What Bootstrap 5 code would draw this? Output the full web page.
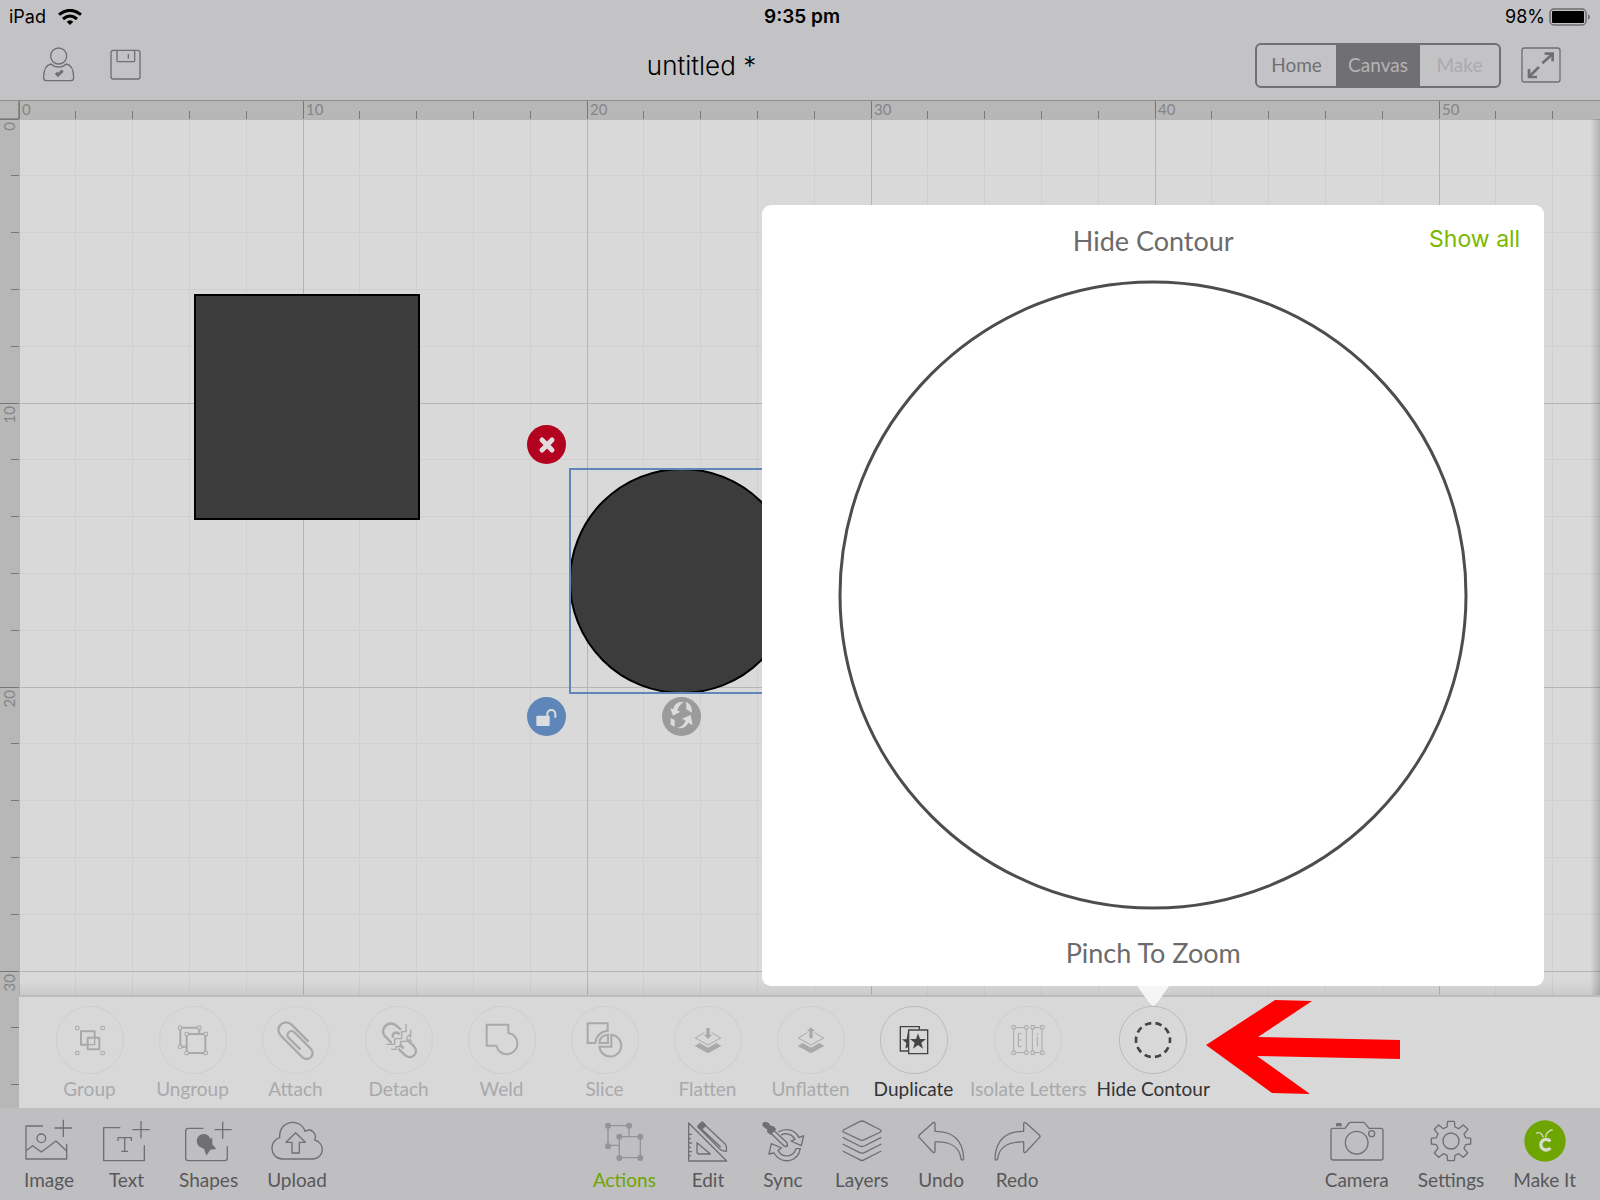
<!DOCTYPE html>
<html lang="en">
<head>
<meta charset="utf-8">
<meta name="viewport" content="width=device-width, initial-scale=1">
<title>untitled *</title>
<link href="https://cdn.jsdelivr.net/npm/bootstrap@5.3.0/dist/css/bootstrap.min.css" rel="stylesheet">
<style>
  body { font-family: Lato, "Open Sans", sans-serif; font-size: 19px; line-height: 24px; background: #c3c3c5; color: #58585a; }
  button { font: inherit; color: inherit; background: none; border: 0; padding: 0; }
  svg { display: block; }
  .ui-sans { font-family: Inter, Roboto, sans-serif; }
  .icon { fill: none; stroke: #707072; stroke-width: 4; stroke-linejoin: round; }

  .status-bar { height: 32px; padding: 1px 9px 0; font-size: 18px; color: #000; }
  .status-bar .clock { font-size: 19px; }
  .top-bar { height: 68px; padding: 0 39px 2px 42px; }
  .doc-title { font-size: 26px; font-weight: 300; color: #000; padding-top: 2px; }
  .mode-switch { height: 45px; border: 2px solid #707072; border-radius: 6px; overflow: hidden; }
  .mode-switch button { width: 79px; color: #707072; }
  .mode-switch .current { width: 84px; background: #707072; color: #b4b4b6; }
  .mode-switch button:disabled { color: #aaaaac; }

  .ruler { background: #b7b7b7; color: #858585; font-size: 15px; line-height: 16px; }
  .ruler-top { height: 19px; border-top: 1px solid #8d8d8d; }
  .ruler-corner { width: 19px; border-right: 1px solid #8d8d8d; border-bottom: 1px solid #8d8d8d; }
  .ruler-side { width: 19px; }
  .ruler-top .step { width: 284px; padding-left: 3px; }
  .ruler-side .step { height: 284px; padding: 3px 0 0 1px; }
  .ruler-side .step span { display: block; writing-mode: vertical-rl; transform: rotate(180deg); }

  .canvas { background: #d9d9d9; }
  .canvas::after { content: ""; position: absolute; inset: 0; pointer-events: none;
    background: linear-gradient(to left, rgba(0,0,0,.18), transparent 10px), linear-gradient(to top, rgba(0,0,0,.07), transparent 14px); }
  .shape-square { left: 175px; top: 175px; width: 226px; height: 226px; background: #3c3c3c; border: 2px solid #000; }
  .selection { left: 550px; top: 349px; width: 226px; height: 226px; }
  .selection::after { content: ""; position: absolute; inset: 0; border: 2px solid #5f86b8; }
  .selection .shape-circle { width: 226px; height: 226px; border-radius: 50%; background: #3c3c3c; border: 2px solid #000; }
  .handle { width: 39px; height: 39px; border-radius: 50%; }
  .handle-delete { left: 508px; top: 306px; background: #b20220; }
  .handle-lock { left: 508px; top: 578px; background: #5f86b8; }
  .handle-rotate { left: 643px; top: 578px; background: #9b9b9b; }

  .actions-panel { height: 113px; padding: 9px 24px 0; gap: 10px; background: #d8d8d9; border-top: 2px solid #bcbcbc; }
  .action { min-width: 93px; color: #333; }
  .action svg { width: 68px; height: 68px; margin: 0 auto 3px; }
  .action .ring { stroke: #bbb; stroke-width: 3; }
  .action .icon { stroke: #444; }
  .action:disabled { color: #a9a9aa; }
  .action:disabled .icon { stroke: #a9a9aa; }
  .action:disabled .ring { stroke: #cecece; }

  .contour-popover { bottom: 100%; left: 50%; width: 782px; margin-left: -391px; margin-bottom: 20px; border-radius: 9px; background: #fff; color: #6b6b6b; z-index: 5; }
  .contour-popover::after { content: ""; position: absolute; top: 100%; left: 50%; width: 32px; height: 20px; margin-left: -16px; background: #f5f5f5; clip-path: polygon(0 0, 100% 0, 62% 85%, 50% 100%, 38% 85%); }
  .popover-heading { height: 73px; padding-bottom: 2px; font-size: 27px; }
  .popover-foot { height: 64px; padding-top: 19px; font-size: 27px; }
  .show-all { right: 24px; font-size: 23px; color: #7ab800; padding-bottom: 3px; }
  .pointer-arrow { left: 100%; top: -6px; margin-left: -4px; }

  .tool-bar { height: 92px; padding: 10px 24px 0; background: #bfbfc1; }
  .tool-group { gap: 29px; }
  .tool-group-center { margin-right: 18px; }
  .tool { min-width: 46px; }
  .tool svg { height: 45px; margin: 0 auto 5px; }
  .tool.current { color: #6fa500; }
  .tool.current .icon { stroke: #949496; }
</style>
</head>
<body class="d-flex flex-column min-vh-100 overflow-hidden">

<header>
  <div class="status-bar ui-sans d-flex align-items-center">
    <div class="d-flex align-items-center col">
      <span>iPad</span>
      <svg class="ms-2 ps-1" width="28" height="16" viewBox="0 0 72 48"><g fill="none" stroke="#000" stroke-width="9"><path d="M3 17Q36-9 69 17"/><path d="M15 30Q36 12 57 30"/></g><path d="M26 38Q36 29 46 38L36 48Z"/></svg>
    </div>
    <span class="clock fw-semibold ps-1">9:35 pm</span>
    <div class="d-flex align-items-center justify-content-end gap-1 col">
      <span>98%</span>
      <svg width="42" height="18" viewBox="0 0 42 18"><rect x="1" y="1" width="36" height="16" rx="4" fill="none" stroke="#6d6d6f" stroke-width="1.5"/><rect x="3" y="3" width="32" height="12" rx="1"/><path d="M39 6Q43 9 39 12Z" fill="#6d6d6f"/></svg>
    </div>
  </div>
  <nav class="top-bar d-flex align-items-center">
    <button type="button" aria-label="Account"><svg width="33" height="36" viewBox="0 0 99 108"><g class="icon"><circle cx="50" cy="27" r="24"/><path d="M27 51C9 54 5 75 5 92Q5 101 14 101H86Q95 101 95 92C95 75 91 54 73 51C60 63 40 63 27 51Z"/></g><path d="M42 77L48 84L62 71" fill="none" stroke="#707072" stroke-width="9"/></svg></button>
    <button type="button" class="ms-4 ps-2" aria-label="Save"><svg width="41" height="32" viewBox="-12 0 123 96" class="icon"><rect x="0" y="4" width="87" height="86" rx="7"/><path d="M18 4V35Q18 38 22 38H67Q71 38 71 35V4M52 15V29"/></svg></button>
    <div class="doc-title ui-sans flex-grow-1 text-center">untitled *</div>
    <div class="mode-switch d-flex" role="group" aria-label="Mode">
      <button type="button">Home</button>
      <button type="button" class="current">Canvas</button>
      <button type="button" disabled>Make</button>
    </div>
    <button type="button" class="ms-3 ps-1" aria-label="Full screen"><svg width="40" height="36" viewBox="0 0 120 108"><rect class="icon" x="3" y="3" width="114" height="102" rx="7"/><g fill="none" stroke="#707072" stroke-width="8"><path d="M64 49L92 23M54 60L27 86"/><path d="M71 20H95V43M24 66V90H48"/></g></svg></button>
  </nav>
</header>

<main class="flex-grow-1 d-flex flex-column">
  <div class="ruler ruler-top d-flex">
    <div class="ruler-corner flex-shrink-0"></div>
    <div class="flex-grow-1 position-relative overflow-hidden">
      <svg class="position-absolute w-100 h-100"><defs><pattern id="ticks-x" width="284" height="18" patternUnits="userSpaceOnUse"><path d="M57 10V18M114 10V18M171 10V18M228 10V18" transform="translate(-.5)" stroke="#777"/><path d="M.5 0V18" stroke="#777"/></pattern></defs><rect width="100%" height="100%" fill="url(#ticks-x)"/></svg>
      <div class="d-flex position-relative"><span class="step flex-shrink-0">0</span><span class="step flex-shrink-0">10</span><span class="step flex-shrink-0">20</span><span class="step flex-shrink-0">30</span><span class="step flex-shrink-0">40</span><span class="step flex-shrink-0">50</span></div>
    </div>
  </div>

  <div class="flex-grow-1 d-flex">
    <div class="ruler ruler-side flex-shrink-0 position-relative overflow-hidden">
      <svg class="position-absolute w-100 h-100"><defs><pattern id="ticks-y" width="19" height="284" patternUnits="userSpaceOnUse"><path d="M11 56.500H19M11 113.500H19M11 170.500H19M11 227.500H19M0 .5H19" stroke="#777"/></pattern></defs><rect width="100%" height="100%" fill="url(#ticks-y)"/></svg>
      <div class="position-absolute top-0 start-0">
        <div class="step"><span>0</span></div><div class="step"><span>10</span></div><div class="step"><span>20</span></div><div class="step"><span>30</span></div>
      </div>
    </div>

    <div class="flex-grow-1 d-flex flex-column">
      <section class="canvas flex-grow-1 position-relative overflow-hidden" aria-label="Design canvas">
        <svg class="position-absolute w-100 h-100"><defs><pattern id="mat" width="284" height="284" patternUnits="userSpaceOnUse"><path d="M56.500 0V284M113.500 0V284M170.500 0V284M227.500 0V284M0 56.500H284M0 113.500H284M0 170.500H284M0 227.500H284" stroke="#d0d0d0"/><path d="M.5 0V284M0 .5H284" stroke="#b5b5b5"/></pattern></defs><rect width="100%" height="100%" fill="url(#mat)"/></svg>
        <div class="shape-square position-absolute"></div>
        <div class="selection position-absolute"><div class="shape-circle"></div></div>
        <button type="button" class="handle handle-delete position-absolute" aria-label="Delete"><svg width="39" height="39" viewBox="0 0 39 39"><path d="M15 15L25 25M25 15L15 25" stroke="#e2dcdd" stroke-width="5" stroke-linecap="round"/></svg></button>
        <button type="button" class="handle handle-lock position-absolute" aria-label="Unlock proportions"><svg width="39" height="39" viewBox="0 0 117 117"><rect x="28" y="56" width="40" height="31" rx="3" fill="#dcdde0"/><path d="M61 58V51A12 12 0 0 1 85 51V62" fill="none" stroke="#dcdde0" stroke-width="6"/></svg></button>
        <button type="button" class="handle handle-rotate position-absolute" aria-label="Rotate"><svg width="39" height="39" viewBox="0 0 117 117" fill="#dcdcdc"><path d="M66 14C47 13 36 22 34 37L25 34L33 56L55 44L46 41C48 30 54 22 66 14Z"/><path d="M71 14Q90 20 90 47L73 37V24Z"/><path d="M26 63L38 69V89L26 83Z"/><path d="M46 92C57 97 72 91 79 77L92 85L86 54L60 65L71 71C65 85 57 90 46 92Z"/></svg></button>
      </section>

      <section class="actions-panel d-flex align-items-start" aria-label="Actions">
        <button type="button" class="action" disabled><svg viewBox="-102 -102 204 204" class="icon"><circle class="ring" r="101"/><g stroke-width="3"><path d="M-43-41h10v10h-10zM33-41h10v10h-10zM-43 34h10v10h-10zM33 34h10v10h-10z"/></g><path d="M-27-26H14V-7H-7V14H-27ZM-7-7H28V28H-7Z" stroke-width="6"/><path d="M14-7V14H-7" stroke-width="4"/></svg>Group</button>
        <button type="button" class="action" disabled><svg viewBox="-102 -102 204 204" class="icon"><circle class="ring" r="101"/><path d="M-38-37H19V-18M-38-37V20H-19M-19-18H37V39H-19Z" stroke-width="6"/><g stroke-width="3" fill="#d8d8d9"><path d="M-44-42h10v10h-10zM14-42h10v10h-10zM-44 15h10v10h-10zM-24-23h10v10h-10zM33-23h10v10h-10zM-24 34h10v10h-10zM33 34h10v10h-10z"/></g></svg>Ungroup</button>
        <button type="button" class="action" disabled><svg viewBox="-102 -102 204 204" class="icon"><circle class="ring" r="101"/><path transform="rotate(-45)" d="M23 30V-42A23 23 0 0 0-23-42V50A18 18 0 0 0 13 50V-20A12 12 0 0 0-11-20V30" stroke-width="7"/></svg>Attach</button>
        <button type="button" class="action" disabled><svg viewBox="-102 -102 204 204" class="icon"><circle class="ring" r="101"/><path d="M-23 8L-41-10C-58-30-38-58-12-46L6-31M-18-7C-22-22-8-27 2-17" stroke-width="7"/><path d="M25 0L44 18C62 37 40 62 19 46L-2 26M2 13L14 25" stroke-width="7"/><path d="M21-48V-25H8V-4H-13V13H-38M35-31V-8M35-17L24-9V4H5V20H-9V28H-24M-24 13V6M31-5L38 6" stroke-width="4"/></svg>Detach</button>
        <button type="button" class="action" disabled><svg viewBox="-102 -102 204 204" class="icon"><circle class="ring" r="101"/><path d="M-46-46H19V-21A32 32 0 1 1-17 17H-46Z" stroke-width="6" stroke-linejoin="miter"/></svg>Weld</button>
        <button type="button" class="action" disabled><svg viewBox="-102 -102 204 204" class="icon"><circle class="ring" r="101"/><g stroke-width="6" stroke-linejoin="miter"><path d="M-52-50H8V-28Q-25-24-29 9H-52Z"/><path d="M19-16A33 33 0 1 1-17 20H19Z"/><path d="M9-16V9H-17Q-17-13 9-16Z"/></g></svg>Slice</button>
        <button type="button" class="action" disabled><svg viewBox="-102 -102 204 204" class="icon"><circle class="ring" r="101"/><path d="M-11-22L-38-6L0 15L38-6L11-22" stroke-width="3"/><path d="M-40 18L-25 9L0 23L25 9L40 18L0 40Z" fill="#a9a9aa" stroke="none"/><path d="M-5-36H5V-16H12L0-3L-12-16H-5Z" fill="#a9a9aa" stroke="none"/></svg>Flatten</button>
        <button type="button" class="action" disabled><svg viewBox="-102 -102 204 204" class="icon"><circle class="ring" r="101"/><path d="M-11-22L-38-6L0 15L38-6L11-22" stroke-width="3"/><path d="M-40 18L-25 9L0 23L25 9L40 18L0 40Z" fill="#a9a9aa" stroke="none"/><path d="M-5-5H5V-26H12L0-38L-12-26H-5Z" fill="#a9a9aa" stroke="none"/></svg>Unflatten</button>
        <button type="button" class="action"><svg viewBox="-102 -102 204 204" class="icon"><circle class="ring" r="101"/><g stroke-linejoin="miter"><path d="M-16 33H-41V-40H16V-31M-16-30H41V41H-16Z"/></g><path d="M12-20L18-3H36L22 8L27 26L12 15L-3 26L2 8L-12-3H6Z" fill="#444" stroke="none"/><path d="M-18-27V22L-26 25L-23 9L-36-2H-22Z" fill="#444" stroke="none"/></svg>Duplicate</button>
        <button type="button" class="action" disabled><svg viewBox="-102 -102 204 204" class="icon"><circle class="ring" r="101"/><g stroke-width="3"><path d="M-43-38V39M-5-38V39M-37-37H-11M-37 38H-11M13-38V39M42-38V39M19-37H42M19 38H42"/><path d="M-19-19H-29V20H-19M-29 0H-20M28-10V20M28-21V-15"/><path fill="#d8d8d9" d="M-48-43h10v10h-10zM-10-43h10v10h-10zM-48 33h10v10h-10zM-10 33h10v10h-10zM9-43h10v10h-10zM38-43h10v10h-10zM9 33h10v10h-10zM38 33h10v10h-10z"/></g></svg>Isolate Letters</button>
        <div class="position-relative">
          <button type="button" class="action" aria-expanded="true"><svg viewBox="-102 -102 204 204" class="icon"><circle class="ring" r="101"/><circle r="51" stroke-width="8" pathLength="200" stroke-dasharray="12 8" stroke-dashoffset="6"/></svg>Hide Contour</button>
          <div class="contour-popover position-absolute" role="dialog" aria-label="Hide Contour">
            <div class="popover-heading d-flex align-items-center justify-content-center position-relative">
              <span>Hide Contour</span>
              <button type="button" class="show-all ui-sans position-absolute">Show all</button>
            </div>
            <svg class="w-100" viewBox="0 0 782 644"><circle cx="391" cy="317" r="313" fill="none" stroke="#4d4d4d" stroke-width="3"/></svg>
            <div class="popover-foot text-center">Pinch To Zoom</div>
          </div>
          <svg class="pointer-arrow position-absolute" width="195" height="94" viewBox="0 0 195 94"><path d="M0 45L69 0L106 1L52 37L194 40V59L51 56L104 94L66 93Z" fill="#f00"/></svg>
        </div>
      </section>
    </div>
  </div>
</main>

<footer class="tool-bar d-flex justify-content-between align-items-start">
  <div class="tool-group d-flex">
    <button type="button" class="tool"><svg width="48" viewBox="72 415 144 135" class="icon"><path d="M126 439H75V538H197V492M187 420V472M160 445H213"/><circle cx="121" cy="476" r="13"/><path d="M75 513L95 498L121 517L165 484L197 514"/></svg>Image</button>
    <button type="button" class="tool"><svg width="47" viewBox="307 415 141 135" class="icon"><path d="M359 444H309V543H431V497M421 424V476M395 450H447"/><path d="M352 484V474H392V484M372 474V515M362 515H382"/></svg>Text</button>
    <button type="button" class="tool"><svg width="47" viewBox="558 415 141 135" class="icon"><path d="M613 446H568Q560 446 560 454V535Q560 543 568 543H677Q685 543 685 535V500M671 426V477M647 450H698"/><circle cx="614" cy="484" r="21" fill="#707072" stroke="none"/><path d="M614 486L640 474V494L652 508L634 510L622 528L615 508L602 500Z" fill="#707072" stroke="none"/></svg>Shapes</button>
    <button type="button" class="tool"><svg width="52" viewBox="814 415 156 135" class="icon"><path d="M848 538C808 536 808 482 840 474C836 420 904 414 916 455C936 442 953 465 945 481C979 491 973 536 940 538Z"/><path d="M888 459L917 488H899V520H877V488H859Z"/></svg>Upload</button>
  </div>
  <div class="tool-group tool-group-center d-flex">
    <button type="button" class="tool current"><svg width="46" viewBox="594 415 138 135" class="icon"><path d="M648 497H615V438H678V470M649 471H712V534H649Z"/><g fill="#949496" stroke="none"><circle cx="615" cy="438" r="9"/><circle cx="678" cy="438" r="9"/><circle cx="615" cy="500" r="9"/><circle cx="649" cy="471" r="9"/><circle cx="712" cy="471" r="9"/><circle cx="649" cy="535" r="9"/><circle cx="712" cy="535" r="9"/></g></svg>Actions</button>
    <button type="button" class="tool"><svg width="46" viewBox="846 415 138 135" class="icon"><path d="M857 430V544H971ZM857 464H867M857 477H864M857 490H867M857 503H864M857 516H867M857 528H864"/><path d="M882 489V516Q882 523 889 523H922Z"/><path d="M885 438L897 428L967 494Q972 500 970 515Q958 514 953 510L885 442M898 450L953 502"/><path d="M884 441L898 427L908 437L895 450Z" fill="#707072"/></svg>Edit</button>
    <button type="button" class="tool"><svg width="46" viewBox="1077 415 138 135" class="icon"><path d="M1132 457C1156 442 1184 452 1194 474L1208 468L1201 498L1170 484L1182 479C1173 463 1153 458 1140 466M1198 507C1190 550 1140 555 1119 520L1104 523L1111 492L1142 505L1131 512C1145 537 1178 533 1185 507Z"/><path d="M1118 452L1155 486Q1162 494 1158 500Q1151 502 1146 496L1110 461Z"/><path d="M1085 430Q1094 422 1104 431L1109 438L1118 440L1126 449L1109 466L1098 457L1099 450L1087 441Q1082 435 1085 430Z" fill="#707072" stroke="none"/></svg>Sync</button>
    <button type="button" class="tool"><svg width="46" viewBox="116 415 138 135" class="icon"><path d="M129 451L178 426Q185 422 192 426L241 451Q244 454 241 457L192 480Q185 484 178 480L129 457Q126 454 129 451ZM127 473L178 499Q185 502 192 499L243 473M127 493L178 519Q185 522 192 519L243 493M127 514L178 540Q185 545 192 540L243 514"/></svg>Layers</button>
    <button type="button" class="tool"><svg width="47" viewBox="355 415 141 135" class="icon"><path d="M359 466L400 429Q406 427 406 433V455C457 454 491 480 492 538Q489 544 484 538C480 502 451 485 406 487V514Q405 522 399 517L359 474Q355 470 359 466Z"/></svg>Undo</button>
    <button type="button" class="tool"><svg width="47" viewBox="584 415 141 135" class="icon"><path d="M720 466L679 429Q673 427 673 433V455C622 454 588 480 587 538Q590 544 595 538C599 502 628 485 673 487V514Q674 522 680 517L720 474Q724 470 720 466Z"/></svg>Redo</button>
  </div>
  <div class="tool-group d-flex">
    <button type="button" class="tool"><svg width="56" viewBox="412 415 168 135" class="icon"><path d="M424 446H460L472 430Q474 428 478 428H514Q518 428 520 431L532 446H568Q574 446 574 452V535Q574 541 568 541H424Q418 541 418 535V452Q418 446 424 446Z"/><circle cx="495" cy="489" r="34"/><circle cx="540" cy="462" r="9"/><path d="M433 440V434Q433 430 437 430H446Q450 430 450 434V440Z" fill="#707072" stroke="none"/></svg>Camera</button>
    <button type="button" class="tool"><svg width="46" viewBox="711 415 138 135" class="icon"><circle cx="780" cy="484" r="24"/><path d="M770 425H790L792 442L803 447L817 436L831 449L819 463L824 474L839 476V493L824 495L819 506L830 520L817 533L803 522L792 527L790 543H770L768 527L757 522L743 533L730 520L741 506L736 495L721 493V476L736 474L741 463L730 449L743 436L757 447L768 442Z"/></svg>Settings</button>
    <button type="button" class="tool"><svg width="46" viewBox="997 415 138 135"><circle cx="1066" cy="484" r="62" fill="#6fa500"/><g fill="none" stroke="#d4dccb"><path d="M1082 485A16 16 0 1 0 1082 505" stroke-width="10"/><path d="M1039 461Q1054 453 1061 473M1067 473Q1071 454 1089 450" stroke-width="4"/></g></svg>Make It</button>
  </div>
</footer>

<script src="https://cdn.jsdelivr.net/npm/bootstrap@5.3.0/dist/js/bootstrap.bundle.min.js"></script>
</body>
</html>
